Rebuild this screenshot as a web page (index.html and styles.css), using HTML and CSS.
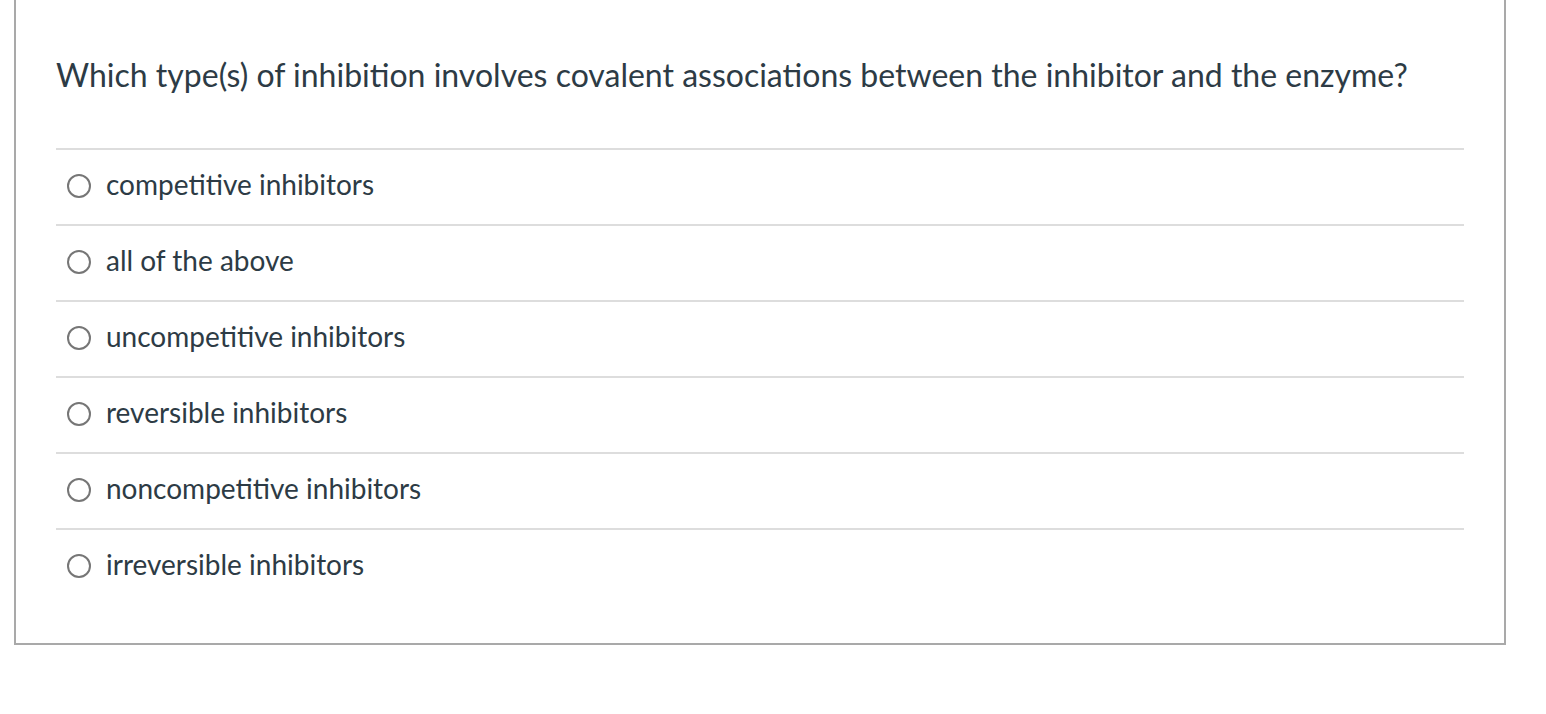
FILE: index.html
```html
<!DOCTYPE html>
<html lang="en">
<head>
<meta charset="utf-8">
<title>Quiz question</title>
<link rel="stylesheet" href="styles.css">
</head>
<body>
<div class="quiz-box">
  <div class="question-text">Which type(s) of inhibition involves covalent associations between the inhibitor and the enzyme?</div>
  <div class="answers">
    <label class="answer"><span class="radio"></span><span class="answer-text">competitive inhibitors</span></label>
    <label class="answer"><span class="radio"></span><span class="answer-text">all of the above</span></label>
    <label class="answer"><span class="radio"></span><span class="answer-text">uncompetitive inhibitors</span></label>
    <label class="answer"><span class="radio"></span><span class="answer-text">reversible inhibitors</span></label>
    <label class="answer"><span class="radio"></span><span class="answer-text">noncompetitive inhibitors</span></label>
    <label class="answer"><span class="radio"></span><span class="answer-text">irreversible inhibitors</span></label>
  </div>
</div>
</body>
</html>
```
FILE: styles.css
```css
html, body {
  margin: 0;
  padding: 0;
  background: #ffffff;
}
body {
  font-family: Lato, "Open Sans", "Liberation Sans", sans-serif;
  color: #2d3b45;
}
.quiz-box {
  margin-left: 14px;
  width: 1492px;
  box-sizing: border-box;
  border: 2px solid #a9a9a9;
  border-top: none;
  padding: 0 40px 39px 40px;
}
.question-text {
  padding-top: 57px;
  font-size: 32px;
  line-height: 36px;
  margin-bottom: 55px;
}
.answers {
  display: flex;
  flex-direction: column;
}
.answer {
  display: flex;
  align-items: center;
  height: 74px;
  border-top: 2px solid #dddddd;
  padding-left: 11px;
  gap: 15px;
  font-size: 28px;
}
.radio {
  width: 24px;
  height: 24px;
  box-sizing: border-box;
  border: 2px solid #767676;
  border-radius: 50%;
  flex: none;
  margin-top: -2px;
}
.answer-text {
  margin-top: -6px;
  line-height: 32px;
}
```
